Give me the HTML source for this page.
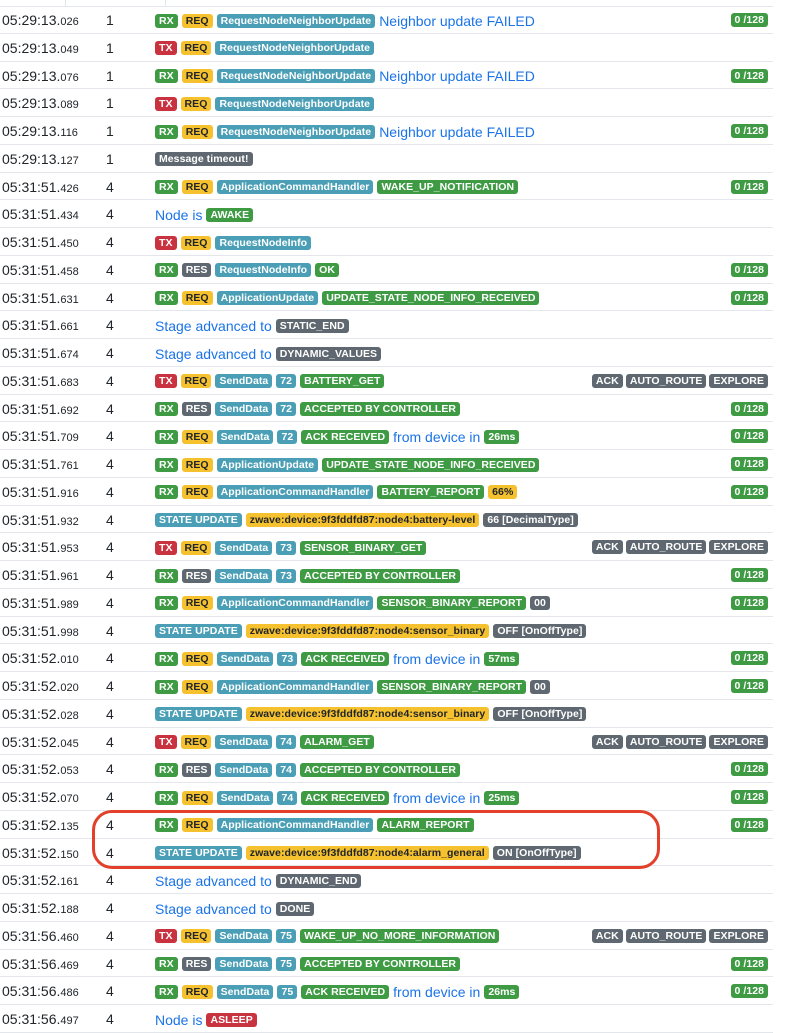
<!DOCTYPE html>
<html><head><meta charset="utf-8"><style>
body{margin:0;width:790px;height:1024px;overflow:hidden;background:#fff;font-family:"Liberation Sans",sans-serif;position:relative}
.top{position:absolute;left:0;top:0;width:773px;height:6px;border-bottom:1px solid #e3e6ea}
.top i{position:absolute;top:0;height:6px;border-left:1px solid #e3e6ea}
.r{position:absolute;left:0;width:773px;height:27.75px;border-bottom:1.5px solid #e3e6ea;box-sizing:border-box;font-size:14px;color:#212529}
.t{position:absolute;left:2px;top:6px}
.t small{font-size:11px}
.n{position:absolute;left:106px;top:6px}
.c{position:absolute;left:155px;top:6px;display:flex;gap:4px;align-items:center;white-space:nowrap;height:17px}
.rt{position:absolute;right:5px;top:7px;display:flex;gap:3px}
b{display:inline-block;font-size:10.5px;font-weight:bold;color:#fff;padding:1px 4px;line-height:12px;border-radius:3px;letter-spacing:0.05px}
.g{background:#3e9b44}.y{background:#f5c12e;color:#212529}.q{background:#4a9fb6}.d{background:#c9333f}.k{background:#5f6870}
.s{color:#1a73e8;font-size:14px}
.oval{position:absolute;left:92px;top:810px;width:562px;height:53px;border:3px solid #e2402b;border-radius:20px}
</style></head><body>
<div class="top"><i style="left:65px"></i><i style="left:165px"></i></div>

<div class="r" style="top:6px"><span class="t">05:29:13.<small>026</small></span><span class="n">1</span><div class="c"><b class="g">RX</b><b class="y">REQ</b><b class="q">RequestNodeNeighborUpdate</b><span class="s">Neighbor update FAILED</span></div><div class="rt"><b class="g">0 /128</b></div></div>
<div class="r" style="top:33.75px"><span class="t">05:29:13.<small>049</small></span><span class="n">1</span><div class="c"><b class="d">TX</b><b class="y">REQ</b><b class="q">RequestNodeNeighborUpdate</b></div></div>
<div class="r" style="top:61.5px"><span class="t">05:29:13.<small>076</small></span><span class="n">1</span><div class="c"><b class="g">RX</b><b class="y">REQ</b><b class="q">RequestNodeNeighborUpdate</b><span class="s">Neighbor update FAILED</span></div><div class="rt"><b class="g">0 /128</b></div></div>
<div class="r" style="top:89.25px"><span class="t">05:29:13.<small>089</small></span><span class="n">1</span><div class="c"><b class="d">TX</b><b class="y">REQ</b><b class="q">RequestNodeNeighborUpdate</b></div></div>
<div class="r" style="top:117px"><span class="t">05:29:13.<small>116</small></span><span class="n">1</span><div class="c"><b class="g">RX</b><b class="y">REQ</b><b class="q">RequestNodeNeighborUpdate</b><span class="s">Neighbor update FAILED</span></div><div class="rt"><b class="g">0 /128</b></div></div>
<div class="r" style="top:144.75px"><span class="t">05:29:13.<small>127</small></span><span class="n">1</span><div class="c"><b class="k">Message timeout!</b></div></div>
<div class="r" style="top:172.5px"><span class="t">05:31:51.<small>426</small></span><span class="n">4</span><div class="c"><b class="g">RX</b><b class="y">REQ</b><b class="q">ApplicationCommandHandler</b><b class="g">WAKE_UP_NOTIFICATION</b></div><div class="rt"><b class="g">0 /128</b></div></div>
<div class="r" style="top:200.25px"><span class="t">05:31:51.<small>434</small></span><span class="n">4</span><div class="c"><span class="s">Node is</span><b class="g">AWAKE</b></div></div>
<div class="r" style="top:228px"><span class="t">05:31:51.<small>450</small></span><span class="n">4</span><div class="c"><b class="d">TX</b><b class="y">REQ</b><b class="q">RequestNodeInfo</b></div></div>
<div class="r" style="top:255.75px"><span class="t">05:31:51.<small>458</small></span><span class="n">4</span><div class="c"><b class="g">RX</b><b class="k">RES</b><b class="q">RequestNodeInfo</b><b class="g">OK</b></div><div class="rt"><b class="g">0 /128</b></div></div>
<div class="r" style="top:283.5px"><span class="t">05:31:51.<small>631</small></span><span class="n">4</span><div class="c"><b class="g">RX</b><b class="y">REQ</b><b class="q">ApplicationUpdate</b><b class="g">UPDATE_STATE_NODE_INFO_RECEIVED</b></div><div class="rt"><b class="g">0 /128</b></div></div>
<div class="r" style="top:311.25px"><span class="t">05:31:51.<small>661</small></span><span class="n">4</span><div class="c"><span class="s">Stage advanced to</span><b class="k">STATIC_END</b></div></div>
<div class="r" style="top:339px"><span class="t">05:31:51.<small>674</small></span><span class="n">4</span><div class="c"><span class="s">Stage advanced to</span><b class="k">DYNAMIC_VALUES</b></div></div>
<div class="r" style="top:366.75px"><span class="t">05:31:51.<small>683</small></span><span class="n">4</span><div class="c"><b class="d">TX</b><b class="y">REQ</b><b class="q">SendData</b><b class="q">72</b><b class="g">BATTERY_GET</b></div><div class="rt"><b class="k">ACK</b><b class="k">AUTO_ROUTE</b><b class="k">EXPLORE</b></div></div>
<div class="r" style="top:394.5px"><span class="t">05:31:51.<small>692</small></span><span class="n">4</span><div class="c"><b class="g">RX</b><b class="k">RES</b><b class="q">SendData</b><b class="q">72</b><b class="g">ACCEPTED BY CONTROLLER</b></div><div class="rt"><b class="g">0 /128</b></div></div>
<div class="r" style="top:422.25px"><span class="t">05:31:51.<small>709</small></span><span class="n">4</span><div class="c"><b class="g">RX</b><b class="y">REQ</b><b class="q">SendData</b><b class="q">72</b><b class="g">ACK RECEIVED</b><span class="s">from device in</span><b class="g">26ms</b></div><div class="rt"><b class="g">0 /128</b></div></div>
<div class="r" style="top:450px"><span class="t">05:31:51.<small>761</small></span><span class="n">4</span><div class="c"><b class="g">RX</b><b class="y">REQ</b><b class="q">ApplicationUpdate</b><b class="g">UPDATE_STATE_NODE_INFO_RECEIVED</b></div><div class="rt"><b class="g">0 /128</b></div></div>
<div class="r" style="top:477.75px"><span class="t">05:31:51.<small>916</small></span><span class="n">4</span><div class="c"><b class="g">RX</b><b class="y">REQ</b><b class="q">ApplicationCommandHandler</b><b class="g">BATTERY_REPORT</b><b class="y">66%</b></div><div class="rt"><b class="g">0 /128</b></div></div>
<div class="r" style="top:505.5px"><span class="t">05:31:51.<small>932</small></span><span class="n">4</span><div class="c"><b class="q">STATE UPDATE</b><b class="y">zwave:device:9f3fddfd87:node4:battery-level</b><b class="k">66 [DecimalType]</b></div></div>
<div class="r" style="top:533.25px"><span class="t">05:31:51.<small>953</small></span><span class="n">4</span><div class="c"><b class="d">TX</b><b class="y">REQ</b><b class="q">SendData</b><b class="q">73</b><b class="g">SENSOR_BINARY_GET</b></div><div class="rt"><b class="k">ACK</b><b class="k">AUTO_ROUTE</b><b class="k">EXPLORE</b></div></div>
<div class="r" style="top:561px"><span class="t">05:31:51.<small>961</small></span><span class="n">4</span><div class="c"><b class="g">RX</b><b class="k">RES</b><b class="q">SendData</b><b class="q">73</b><b class="g">ACCEPTED BY CONTROLLER</b></div><div class="rt"><b class="g">0 /128</b></div></div>
<div class="r" style="top:588.75px"><span class="t">05:31:51.<small>989</small></span><span class="n">4</span><div class="c"><b class="g">RX</b><b class="y">REQ</b><b class="q">ApplicationCommandHandler</b><b class="g">SENSOR_BINARY_REPORT</b><b class="k">00</b></div><div class="rt"><b class="g">0 /128</b></div></div>
<div class="r" style="top:616.5px"><span class="t">05:31:51.<small>998</small></span><span class="n">4</span><div class="c"><b class="q">STATE UPDATE</b><b class="y">zwave:device:9f3fddfd87:node4:sensor_binary</b><b class="k">OFF [OnOffType]</b></div></div>
<div class="r" style="top:644.25px"><span class="t">05:31:52.<small>010</small></span><span class="n">4</span><div class="c"><b class="g">RX</b><b class="y">REQ</b><b class="q">SendData</b><b class="q">73</b><b class="g">ACK RECEIVED</b><span class="s">from device in</span><b class="g">57ms</b></div><div class="rt"><b class="g">0 /128</b></div></div>
<div class="r" style="top:672px"><span class="t">05:31:52.<small>020</small></span><span class="n">4</span><div class="c"><b class="g">RX</b><b class="y">REQ</b><b class="q">ApplicationCommandHandler</b><b class="g">SENSOR_BINARY_REPORT</b><b class="k">00</b></div><div class="rt"><b class="g">0 /128</b></div></div>
<div class="r" style="top:699.75px"><span class="t">05:31:52.<small>028</small></span><span class="n">4</span><div class="c"><b class="q">STATE UPDATE</b><b class="y">zwave:device:9f3fddfd87:node4:sensor_binary</b><b class="k">OFF [OnOffType]</b></div></div>
<div class="r" style="top:727.5px"><span class="t">05:31:52.<small>045</small></span><span class="n">4</span><div class="c"><b class="d">TX</b><b class="y">REQ</b><b class="q">SendData</b><b class="q">74</b><b class="g">ALARM_GET</b></div><div class="rt"><b class="k">ACK</b><b class="k">AUTO_ROUTE</b><b class="k">EXPLORE</b></div></div>
<div class="r" style="top:755.25px"><span class="t">05:31:52.<small>053</small></span><span class="n">4</span><div class="c"><b class="g">RX</b><b class="k">RES</b><b class="q">SendData</b><b class="q">74</b><b class="g">ACCEPTED BY CONTROLLER</b></div><div class="rt"><b class="g">0 /128</b></div></div>
<div class="r" style="top:783px"><span class="t">05:31:52.<small>070</small></span><span class="n">4</span><div class="c"><b class="g">RX</b><b class="y">REQ</b><b class="q">SendData</b><b class="q">74</b><b class="g">ACK RECEIVED</b><span class="s">from device in</span><b class="g">25ms</b></div><div class="rt"><b class="g">0 /128</b></div></div>
<div class="r" style="top:810.75px"><span class="t">05:31:52.<small>135</small></span><span class="n">4</span><div class="c"><b class="g">RX</b><b class="y">REQ</b><b class="q">ApplicationCommandHandler</b><b class="g">ALARM_REPORT</b></div><div class="rt"><b class="g">0 /128</b></div></div>
<div class="r" style="top:838.5px"><span class="t">05:31:52.<small>150</small></span><span class="n">4</span><div class="c"><b class="q">STATE UPDATE</b><b class="y">zwave:device:9f3fddfd87:node4:alarm_general</b><b class="k">ON [OnOffType]</b></div></div>
<div class="r" style="top:866.25px"><span class="t">05:31:52.<small>161</small></span><span class="n">4</span><div class="c"><span class="s">Stage advanced to</span><b class="k">DYNAMIC_END</b></div></div>
<div class="r" style="top:894px"><span class="t">05:31:52.<small>188</small></span><span class="n">4</span><div class="c"><span class="s">Stage advanced to</span><b class="k">DONE</b></div></div>
<div class="r" style="top:921.75px"><span class="t">05:31:56.<small>460</small></span><span class="n">4</span><div class="c"><b class="d">TX</b><b class="y">REQ</b><b class="q">SendData</b><b class="q">75</b><b class="g">WAKE_UP_NO_MORE_INFORMATION</b></div><div class="rt"><b class="k">ACK</b><b class="k">AUTO_ROUTE</b><b class="k">EXPLORE</b></div></div>
<div class="r" style="top:949.5px"><span class="t">05:31:56.<small>469</small></span><span class="n">4</span><div class="c"><b class="g">RX</b><b class="k">RES</b><b class="q">SendData</b><b class="q">75</b><b class="g">ACCEPTED BY CONTROLLER</b></div><div class="rt"><b class="g">0 /128</b></div></div>
<div class="r" style="top:977.25px"><span class="t">05:31:56.<small>486</small></span><span class="n">4</span><div class="c"><b class="g">RX</b><b class="y">REQ</b><b class="q">SendData</b><b class="q">75</b><b class="g">ACK RECEIVED</b><span class="s">from device in</span><b class="g">26ms</b></div><div class="rt"><b class="g">0 /128</b></div></div>
<div class="r" style="top:1005px"><span class="t">05:31:56.<small>497</small></span><span class="n">4</span><div class="c"><span class="s">Node is</span><b class="d">ASLEEP</b></div></div>

<div class="oval"></div>
</body></html>
